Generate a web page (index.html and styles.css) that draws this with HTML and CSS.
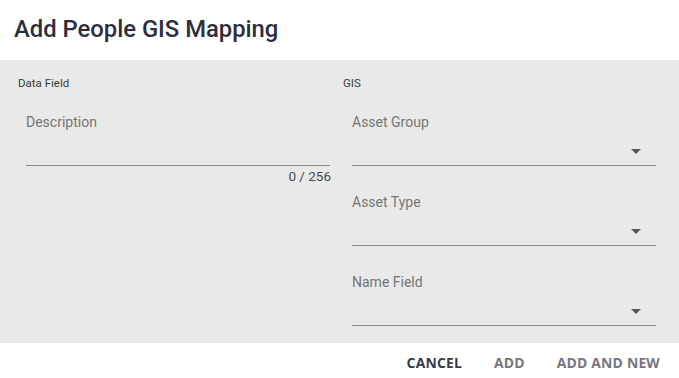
FILE: index.html
```html
<!DOCTYPE html>
<html>
<head>
<meta charset="utf-8">
<link rel="stylesheet" href="styles.css">
</head>
<body>
<div class="dialog">
  <header class="header"><h1 class="title">Add People GIS Mapping</h1></header>
  <main class="body">
    <section class="col">
      <div class="section-label">Data Field</div>
      <div class="field">
        <div class="label">Description</div>
        <div class="line"></div>
        <div class="counter">0 / 256</div>
      </div>
    </section>
    <section class="col">
      <div class="section-label">GIS</div>
      <div class="field select">
        <div class="label">Asset Group</div>
        <div class="line"><span class="arrow"></span></div>
      </div>
      <div class="field select">
        <div class="label">Asset Type</div>
        <div class="line"><span class="arrow"></span></div>
      </div>
      <div class="field select">
        <div class="label">Name Field</div>
        <div class="line"><span class="arrow"></span></div>
      </div>
    </section>
  </main>
  <footer class="footer">
    <button class="btn primary">CANCEL</button>
    <button class="btn">ADD</button>
    <button class="btn">ADD AND NEW</button>
  </footer>
</div>
</body>
</html>
```
FILE: styles.css
```css
html, body { margin: 0; padding: 0; background: #fff; }
body { font-family: Roboto, "Noto Sans", sans-serif; width: 679px; height: 378px; overflow: hidden; }
.dialog { display: flex; flex-direction: column; height: 378px; }
.header { flex: 0 0 60px; height: 60px; display: flex; align-items: center; padding-left: 14px; box-sizing: border-box; }
.title { margin: 0; font-size: 23.8px; font-weight: 500; color: #2e2d3d; padding-bottom: 2px; }
.body { flex: 0 0 283px; background: #e9e9e9; height: 283px; display: grid; grid-template-columns: 313px 313px; column-gap: 12px; padding: 0 23px 0 18px; box-sizing: border-box; }
.section-label { font-size: 11.5px; color: #3a3a3a; margin-top: 16px; height: 14px; line-height: 14px; }
.field { position: relative; margin-left: 8px; height: 80px; margin-top: 24px; }
.select { margin-left: 9px; }
.select + .select { margin-top: 0; }
.label { font-size: 14px; color: #757575; line-height: 16px; }
.line { position: absolute; left: 0; right: 0; top: 29px; height: 22px; border-bottom: 1px solid #888; }
.col:first-child .field .line { right: 1px; }
.arrow { position: absolute; right: 15px; top: 6px; width: 0; height: 0; border-left: 5px solid transparent; border-right: 5px solid transparent; border-top: 5px solid #555; }
.counter { position: absolute; right: 0; top: 54px; font-size: 13.5px; color: #4a4a4a; line-height: 16px; }
.footer { flex: 0 0 35px; display: flex; justify-content: flex-end; align-items: center; padding: 3px 3px 0 0; box-sizing: border-box; }
.btn { background: none; border: none; font-family: "Open Sans", sans-serif; font-weight: 700; font-size: 13.9px; color: #77767e; padding: 0 16px; height: 28px; letter-spacing: 0.2px; }
.primary { color: #3b3a48; }
```
